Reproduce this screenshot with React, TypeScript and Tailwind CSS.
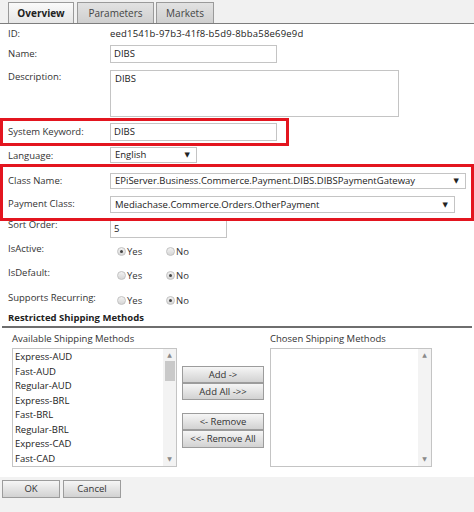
const font = { fontFamily: '"Open Sans", "DejaVu Sans", sans-serif' };

const Tab = ({ label, active, w }: { label: string; active?: boolean; w: string }) => (
  <div
    className={
      (active
        ? "h-[21px] flex items-center justify-center border border-b-0 border-[#9a9a9a] bg-gradient-to-b from-[#fafafa] to-[#e6e6e6] text-[10px] font-bold text-[#222] "
        : "h-[21px] flex items-center justify-center border border-b-0 border-[#9a9a9a] bg-gradient-to-b from-[#e2e2e2] to-[#cfcfcf] text-[10px] text-[#444] ") + w
    }
  >
    {label}
  </div>
);

const Label = ({ children, className = "" }: { children: React.ReactNode; className?: string }) => (
  <div className={"w-[102px] shrink-0 text-[9.5px] text-[#333] " + className}>{children}</div>
);

const Input = ({ value, w }: { value: string; w: string }) => (
  <div className={"h-[18px] border border-[#c4c4c4] bg-white px-[3px] flex items-center text-[9.5px] text-[#222] " + w}>
    {value}
  </div>
);

const Select = ({ value, w, h = "h-[17px]" }: { value: string; w: string; h?: string }) => (
  <div className={"border border-[#c4c4c4] bg-white pl-[4px] pr-[6px] flex items-center justify-between text-[9.5px] text-[#222] " + w + " " + h}>
    <span>{value}</span>
    <span className="text-[7px] text-[#222]">▼</span>
  </div>
);

const Radio = ({ checked, label }: { checked?: boolean; label: string }) => (
  <div className="flex items-center w-[49px]">
    <div className="w-[9px] h-[9px] rounded-full border border-[#c2c2c2] bg-gradient-to-b from-[#f2f2f2] to-[#d6d6d6] flex items-center justify-center">
      {checked && <div className="w-[3px] h-[3px] rounded-full bg-[#444]" />}
    </div>
    <span className="text-[9.5px] text-[#333] ml-[1px]">{label}</span>
  </div>
);

const RadioRow = ({ label, yes, mt }: { label: string; yes: boolean; mt: string }) => (
  <div className={"flex items-center pl-2 h-[14px] " + mt}>
    <Label>{label}</Label>
    <div className="flex items-center pl-[7px] pt-[5px]">
      <Radio checked={yes} label="Yes" />
      <Radio checked={!yes} label="No" />
    </div>
  </div>
);

const Btn = ({ label, w, h = "h-[17px]" }: { label: string; w: string; h?: string }) => (
  <div className={"flex items-center justify-center border border-[#9c9c9c] bg-gradient-to-b from-[#f6f6f6] to-[#d2d2d2] text-[9.5px] text-[#333] " + w + " " + h}>
    {label}
  </div>
);

const Scroll = ({ thumb }: { thumb?: boolean }) => (
  <div className="w-[13px] h-full bg-[#f3f3f3] flex flex-col items-center justify-between py-[2px] text-[6px] text-[#8a8a8a]">
    <div className="flex flex-col items-center w-full">
      <span>▲</span>
      {thumb && <div className="w-[10px] h-[20px] bg-[#c9c9c9] mt-[1px]" />}
    </div>
    <span>▼</span>
  </div>
);

const methods = [
  "Express-AUD",
  "Fast-AUD",
  "Regular-AUD",
  "Express-BRL",
  "Fast-BRL",
  "Regular-BRL",
  "Express-CAD",
  "Fast-CAD",
];

export default function App() {
  return (
    <div className="w-[474px] h-[512px] bg-white relative overflow-hidden" style={font}>
      {/* tabs */}
      <div className="h-[24px] bg-[#f1f1f1] border-b border-[#7d7d7d] flex items-end pl-[8px]">
        <Tab label="Overview" active w="w-[66px]" />
        <div className="w-[3px]" />
        <Tab label="Parameters" w="w-[77px]" />
        <div className="w-[2px]" />
        <Tab label="Markets" w="w-[58px]" />
      </div>

      {/* ID */}
      <div className="flex items-center pl-2 mt-[3px] h-[14px]">
        <Label>ID:</Label>
        <div className="text-[9.5px] text-[#222] tracking-[0.2px]">eed1541b-97b3-41f8-b5d9-8bba58e69e9d</div>
      </div>

      <div className="flex items-start pl-2 mt-[4px]">
        <Label className="pt-[2px]">Name:</Label>
        <Input value="DIBS" w="w-[167px]" />
      </div>

      <div className="flex items-start pl-2 mt-[7px]">
        <Label className="pt-[0px]">Description:</Label>
        <div className="w-[289px] h-[47px] border border-[#c4c4c4] bg-white px-[4px] pt-[1px] text-[9.5px] text-[#222]">
          DIBS
        </div>
      </div>

      <div className="flex items-start pl-2 mt-[6px]">
        <Label className="pt-[2px]">System Keyword:</Label>
        <Input value="DIBS" w="w-[167px]" />
      </div>

      <div className="flex items-start pl-2 mt-[6px]">
        <Label className="pt-[2px]">Language:</Label>
        <Select value="English" w="w-[87px]" h="h-[16px]" />
      </div>

      <div className="flex items-start pl-2 mt-[10px]">
        <Label className="pt-[1px]">Class Name:</Label>
        <Select value="EPiServer.Business.Commerce.Payment.DIBS.DIBSPaymentGateway" w="w-[356px]" h="h-[16px]" />
      </div>

      <div className="flex items-start pl-2 mt-[7px]">
        <Label className="pt-[1px]">Payment Class:</Label>
        <Select value="Mediachase.Commerce.Orders.OtherPayment" w="w-[345px]" />
      </div>

      <div className="flex items-start pl-2 mt-[7px]">
        <Label className="-mt-[2px]">Sort Order:</Label>
        <Input value="5" w="w-[117px]" />
      </div>

      <RadioRow label="IsActive:" yes mt="mt-[4px]" />
      <RadioRow label="IsDefault:" yes={false} mt="mt-[10px]" />
      <RadioRow label="Supports Recurring:" yes={false} mt="mt-[11px]" />

      <div className="mt-[10px] mx-[2px] pl-[6px] border-b-2 border-[#6e6e6e] h-[13px] flex items-end pb-[1px] text-[9.5px] font-bold text-[#222]">
        Restricted Shipping Methods
      </div>

      <div className="flex pl-[12px] mt-[4px]">
        <div className="flex flex-col w-[170px]">
          <div className="text-[9.5px] text-[#333] h-[13px] leading-[13px]">Available Shipping Methods</div>
          <div className="mt-[3px] w-[165px] h-[119px] border border-[#c4c4c4] bg-white flex">
            <div className="flex-1 pt-[1px] pl-[2px]">
              {methods.map((m) => (
                <div key={m} className="h-[14.5px] leading-[14.5px] text-[9.5px] text-[#222]">
                  {m}
                </div>
              ))}
            </div>
            <Scroll thumb />
          </div>
        </div>

        <div className="flex flex-col pt-[34px] w-[88px]">
          <Btn label="Add ->" w="w-[82px]" />
          <Btn label="Add All ->>" w="w-[82px]" />
          <div className="h-[13px]" />
          <Btn label="<- Remove" w="w-[82px]" />
          <Btn label="<<- Remove All" w="w-[82px]" h="h-[18px]" />
        </div>

        <div className="flex flex-col">
          <div className="text-[9.5px] text-[#333] h-[13px] leading-[13px]">Chosen Shipping Methods</div>
          <div className="mt-[3px] w-[162px] h-[119px] border border-[#c4c4c4] bg-white flex">
            <div className="flex-1" />
            <Scroll />
          </div>
        </div>
      </div>

      {/* footer */}
      <div className="mt-[10px] h-[35px] bg-[#f2f2f2] flex items-start pt-[3px] pl-[2px] gap-[3px]">
        <Btn label="OK" w="w-[58px]" h="h-[18px]" />
        <Btn label="Cancel" w="w-[58px]" h="h-[18px]" />
      </div>

      {/* annotation boxes */}
      <div className="absolute left-0 top-[118px] w-[289px] h-[28px] border-[3px] border-[#e3151f]" />
      <div className="absolute left-0 top-[164px] w-[474px] h-[57px] border-[3px] border-[#e3151f]" />
    </div>
  );
}
